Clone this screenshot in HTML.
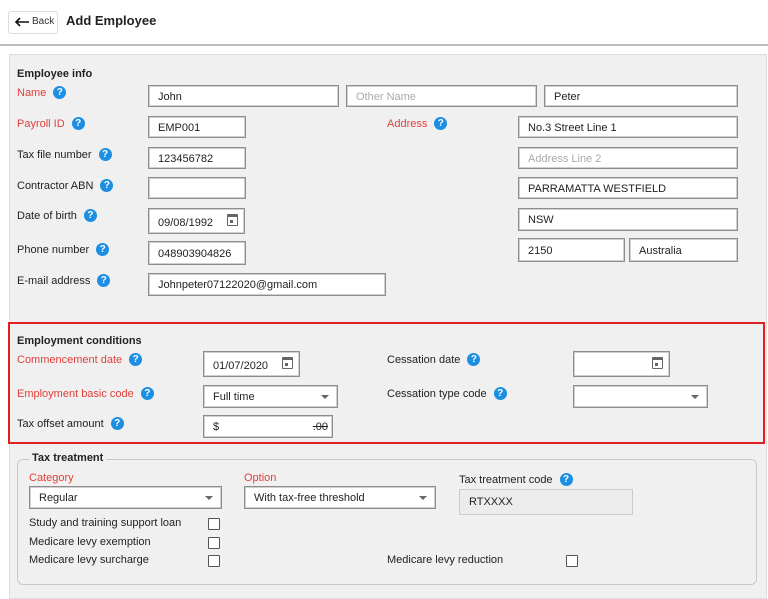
<!DOCTYPE html>
<html><head><meta charset="utf-8"><style>
*{box-sizing:border-box;margin:0;padding:0}
body{width:768px;height:593px;background:#fff;font-family:"Liberation Sans",Arial,sans-serif;font-size:11px;color:#222;position:relative;overflow:hidden}
.a{position:absolute}
.t{position:absolute;line-height:14px;white-space:nowrap}
.r{color:#e0403a}
.b{font-weight:bold}
.q{display:inline-block;width:13px;height:13px;border-radius:50%;background:#1c8fe3;color:#fff;font-weight:bold;font-size:10px;line-height:13px;text-align:center;vertical-align:top;margin-left:7px;margin-top:0px}
.i{position:absolute;background:#fff;border:1px solid #8d8d8d;box-shadow:inset 0 0 0 1px #d0d0d0;padding-left:9px;padding-top:1px;font-size:11px;display:flex;align-items:center}
.ph{color:#aaa}
.dd::after{content:"";position:absolute;right:8px;top:50%;margin-top:-2px;border-left:4px solid transparent;border-right:4px solid transparent;border-top:4px solid #666}
.cal{position:absolute;right:6px;top:50%;margin-top:-7px;width:11px;height:12px;border:1.5px solid #666;border-top-width:3px;border-radius:1px}
.cal::after{content:"";position:absolute;left:2px;top:3px;width:3px;height:3px;background:#666}
.cb{position:absolute;width:12px;height:12px;border:1.5px solid #555;background:#fff;border-radius:1px}
</style></head><body>
<div class="a" style="left:8px;top:11px;width:50px;height:23px;border:1px solid #ddd;border-radius:3px;background:#fff"></div>
<svg class="a" style="left:14px;top:17px" width="16" height="10" viewBox="0 0 16 10"><path d="M15 5H2M6 1L2 5L6 9" stroke="#111" stroke-width="1.6" fill="none"/></svg>
<div class="t" style="left:32px;top:15px;font-size:10px;color:#333">Back</div>
<div class="t b" style="left:66px;top:13px;font-size:13px;line-height:16px">Add Employee</div>
<div class="a" style="left:0;top:44px;width:768px;height:2px;background:#bbb"></div>

<div class="a" style="left:9px;top:54px;width:758px;height:545px;background:#f0f0f0;border:1px solid #ddd"></div>

<div class="t b" style="left:17px;top:67px">Employee info</div>
<div class="t r" style="left:17px;top:86px">Name<span class="q">?</span></div>
<div class="t r" style="left:17px;top:117px">Payroll ID<span class="q">?</span></div>
<div class="t" style="left:17px;top:148px">Tax file number<span class="q">?</span></div>
<div class="t" style="left:17px;top:179px">Contractor ABN<span class="q">?</span></div>
<div class="t" style="left:17px;top:209px">Date of birth<span class="q">?</span></div>
<div class="t" style="left:17px;top:243px">Phone number<span class="q">?</span></div>
<div class="t" style="left:17px;top:274px">E-mail address<span class="q">?</span></div>
<div class="t r" style="left:387px;top:117px">Address<span class="q">?</span></div>

<div class="i" style="left:148px;top:85px;width:191px;height:22px">John</div>
<div class="i ph" style="left:346px;top:85px;width:191px;height:22px">Other Name</div>
<div class="i" style="left:544px;top:85px;width:194px;height:22px">Peter</div>
<div class="i" style="left:148px;top:116px;width:98px;height:22px">EMP001</div>
<div class="i" style="left:518px;top:116px;width:220px;height:22px">No.3 Street Line 1</div>
<div class="i" style="left:148px;top:147px;width:98px;height:22px">123456782</div>
<div class="i ph" style="left:518px;top:147px;width:220px;height:22px">Address Line 2</div>
<div class="i" style="left:148px;top:177px;width:98px;height:22px"></div>
<div class="i" style="left:518px;top:177px;width:220px;height:22px">PARRAMATTA WESTFIELD</div>
<div class="i" style="left:148px;top:208px;width:97px;height:26px;padding-top:3px">09/08/1992<span class="cal"></span></div>
<div class="i" style="left:518px;top:208px;width:220px;height:23px">NSW</div>
<div class="i" style="left:148px;top:241px;width:98px;height:24px">048903904826</div>
<div class="i" style="left:518px;top:238px;width:107px;height:24px">2150</div>
<div class="i" style="left:629px;top:238px;width:109px;height:24px">Australia</div>
<div class="i" style="left:148px;top:273px;width:238px;height:23px">Johnpeter07122020@gmail.com</div>

<div class="a" style="left:8px;top:322px;width:757px;height:122px;border:2px solid #e02020"></div>
<div class="t b" style="left:17px;top:334px">Employment conditions</div>
<div class="t r" style="left:17px;top:353px">Commencement date<span class="q">?</span></div>
<div class="t r" style="left:17px;top:387px">Employment basic code<span class="q">?</span></div>
<div class="t" style="left:17px;top:417px">Tax offset amount<span class="q">?</span></div>
<div class="t" style="left:387px;top:353px">Cessation date<span class="q">?</span></div>
<div class="t" style="left:387px;top:387px">Cessation type code<span class="q">?</span></div>
<div class="i" style="left:203px;top:351px;width:97px;height:26px;padding-top:3px">01/07/2020<span class="cal"></span></div>
<div class="i" style="left:573px;top:351px;width:97px;height:26px"><span class="cal"></span></div>
<div class="i dd" style="left:203px;top:385px;width:135px;height:23px">Full time</div>
<div class="i dd" style="left:573px;top:385px;width:135px;height:23px"></div>
<div class="i" style="left:203px;top:415px;width:130px;height:23px">$<span style="position:absolute;right:4px;text-decoration:line-through">.00</span></div>

<div class="a" style="left:17px;top:459px;width:740px;height:126px;border:1px solid #c8c8c8;border-radius:6px"></div>
<div class="t b" style="left:29px;top:451px;background:#f0f0f0;padding:0 3px">Tax treatment</div>
<div class="t r" style="left:29px;top:471px">Category</div>
<div class="t r" style="left:244px;top:471px">Option</div>
<div class="t" style="left:459px;top:473px">Tax treatment code<span class="q">?</span></div>
<div class="i dd" style="left:29px;top:486px;width:193px;height:23px">Regular</div>
<div class="i dd" style="left:244px;top:486px;width:192px;height:23px">With tax-free threshold</div>
<div class="a" style="left:459px;top:489px;width:174px;height:26px;background:#ececec;border:1px solid #ccc;padding-left:9px;line-height:25px">RTXXXX</div>
<div class="t" style="left:29px;top:516px">Study and training support loan</div>
<div class="t" style="left:29px;top:535px">Medicare levy exemption</div>
<div class="t" style="left:29px;top:553px">Medicare levy surcharge</div>
<div class="t" style="left:387px;top:553px">Medicare levy reduction</div>
<div class="cb" style="left:208px;top:518px"></div>
<div class="cb" style="left:208px;top:537px"></div>
<div class="cb" style="left:208px;top:555px"></div>
<div class="cb" style="left:566px;top:555px"></div>
</body></html>
